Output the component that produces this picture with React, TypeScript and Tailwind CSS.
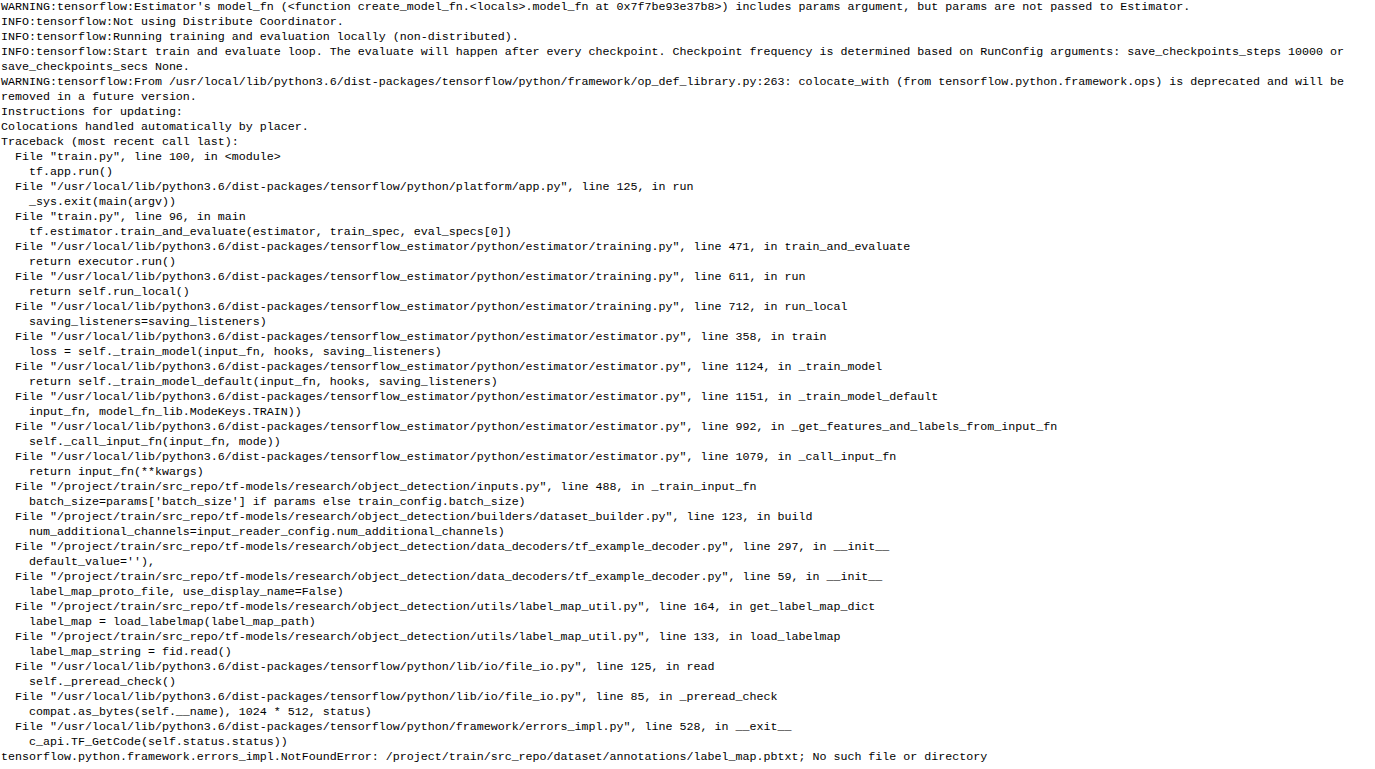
import React from 'react';

const lines = [
  `WARNING:tensorflow:Estimator's model_fn (<function create_model_fn.<locals>.model_fn at 0x7f7be93e37b8>) includes params argument, but params are not passed to Estimator.`,
  `INFO:tensorflow:Not using Distribute Coordinator.`,
  `INFO:tensorflow:Running training and evaluation locally (non-distributed).`,
  `INFO:tensorflow:Start train and evaluate loop. The evaluate will happen after every checkpoint. Checkpoint frequency is determined based on RunConfig arguments: save_checkpoints_steps 10000 or`,
  `save_checkpoints_secs None.`,
  `WARNING:tensorflow:From /usr/local/lib/python3.6/dist-packages/tensorflow/python/framework/op_def_library.py:263: colocate_with (from tensorflow.python.framework.ops) is deprecated and will be`,
  `removed in a future version.`,
  `Instructions for updating:`,
  `Colocations handled automatically by placer.`,
  `Traceback (most recent call last):`,
  `  File "train.py", line 100, in <module>`,
  `    tf.app.run()`,
  `  File "/usr/local/lib/python3.6/dist-packages/tensorflow/python/platform/app.py", line 125, in run`,
  `    _sys.exit(main(argv))`,
  `  File "train.py", line 96, in main`,
  `    tf.estimator.train_and_evaluate(estimator, train_spec, eval_specs[0])`,
  `  File "/usr/local/lib/python3.6/dist-packages/tensorflow_estimator/python/estimator/training.py", line 471, in train_and_evaluate`,
  `    return executor.run()`,
  `  File "/usr/local/lib/python3.6/dist-packages/tensorflow_estimator/python/estimator/training.py", line 611, in run`,
  `    return self.run_local()`,
  `  File "/usr/local/lib/python3.6/dist-packages/tensorflow_estimator/python/estimator/training.py", line 712, in run_local`,
  `    saving_listeners=saving_listeners)`,
  `  File "/usr/local/lib/python3.6/dist-packages/tensorflow_estimator/python/estimator/estimator.py", line 358, in train`,
  `    loss = self._train_model(input_fn, hooks, saving_listeners)`,
  `  File "/usr/local/lib/python3.6/dist-packages/tensorflow_estimator/python/estimator/estimator.py", line 1124, in _train_model`,
  `    return self._train_model_default(input_fn, hooks, saving_listeners)`,
  `  File "/usr/local/lib/python3.6/dist-packages/tensorflow_estimator/python/estimator/estimator.py", line 1151, in _train_model_default`,
  `    input_fn, model_fn_lib.ModeKeys.TRAIN))`,
  `  File "/usr/local/lib/python3.6/dist-packages/tensorflow_estimator/python/estimator/estimator.py", line 992, in _get_features_and_labels_from_input_fn`,
  `    self._call_input_fn(input_fn, mode))`,
  `  File "/usr/local/lib/python3.6/dist-packages/tensorflow_estimator/python/estimator/estimator.py", line 1079, in _call_input_fn`,
  `    return input_fn(**kwargs)`,
  `  File "/project/train/src_repo/tf-models/research/object_detection/inputs.py", line 488, in _train_input_fn`,
  `    batch_size=params['batch_size'] if params else train_config.batch_size)`,
  `  File "/project/train/src_repo/tf-models/research/object_detection/builders/dataset_builder.py", line 123, in build`,
  `    num_additional_channels=input_reader_config.num_additional_channels)`,
  `  File "/project/train/src_repo/tf-models/research/object_detection/data_decoders/tf_example_decoder.py", line 297, in __init__`,
  `    default_value=''),`,
  `  File "/project/train/src_repo/tf-models/research/object_detection/data_decoders/tf_example_decoder.py", line 59, in __init__`,
  `    label_map_proto_file, use_display_name=False)`,
  `  File "/project/train/src_repo/tf-models/research/object_detection/utils/label_map_util.py", line 164, in get_label_map_dict`,
  `    label_map = load_labelmap(label_map_path)`,
  `  File "/project/train/src_repo/tf-models/research/object_detection/utils/label_map_util.py", line 133, in load_labelmap`,
  `    label_map_string = fid.read()`,
  `  File "/usr/local/lib/python3.6/dist-packages/tensorflow/python/lib/io/file_io.py", line 125, in read`,
  `    self._preread_check()`,
  `  File "/usr/local/lib/python3.6/dist-packages/tensorflow/python/lib/io/file_io.py", line 85, in _preread_check`,
  `    compat.as_bytes(self.__name), 1024 * 512, status)`,
  `  File "/usr/local/lib/python3.6/dist-packages/tensorflow/python/framework/errors_impl.py", line 528, in __exit__`,
  `    c_api.TF_GetCode(self.status.status))`,
  `tensorflow.python.framework.errors_impl.NotFoundError: /project/train/src_repo/dataset/annotations/label_map.pbtxt; No such file or directory`,
];

export default function App() {
  return (
    <div className="w-[1375px] h-[769px] overflow-hidden bg-white pl-[1px] text-black">
      <pre className="m-0 font-['Liberation_Mono',monospace] text-[11.67px] leading-[15px] whitespace-pre">
        {lines.map((line, i) => (
          <div key={i}>{line}</div>
        ))}
      </pre>
    </div>
  );
}
